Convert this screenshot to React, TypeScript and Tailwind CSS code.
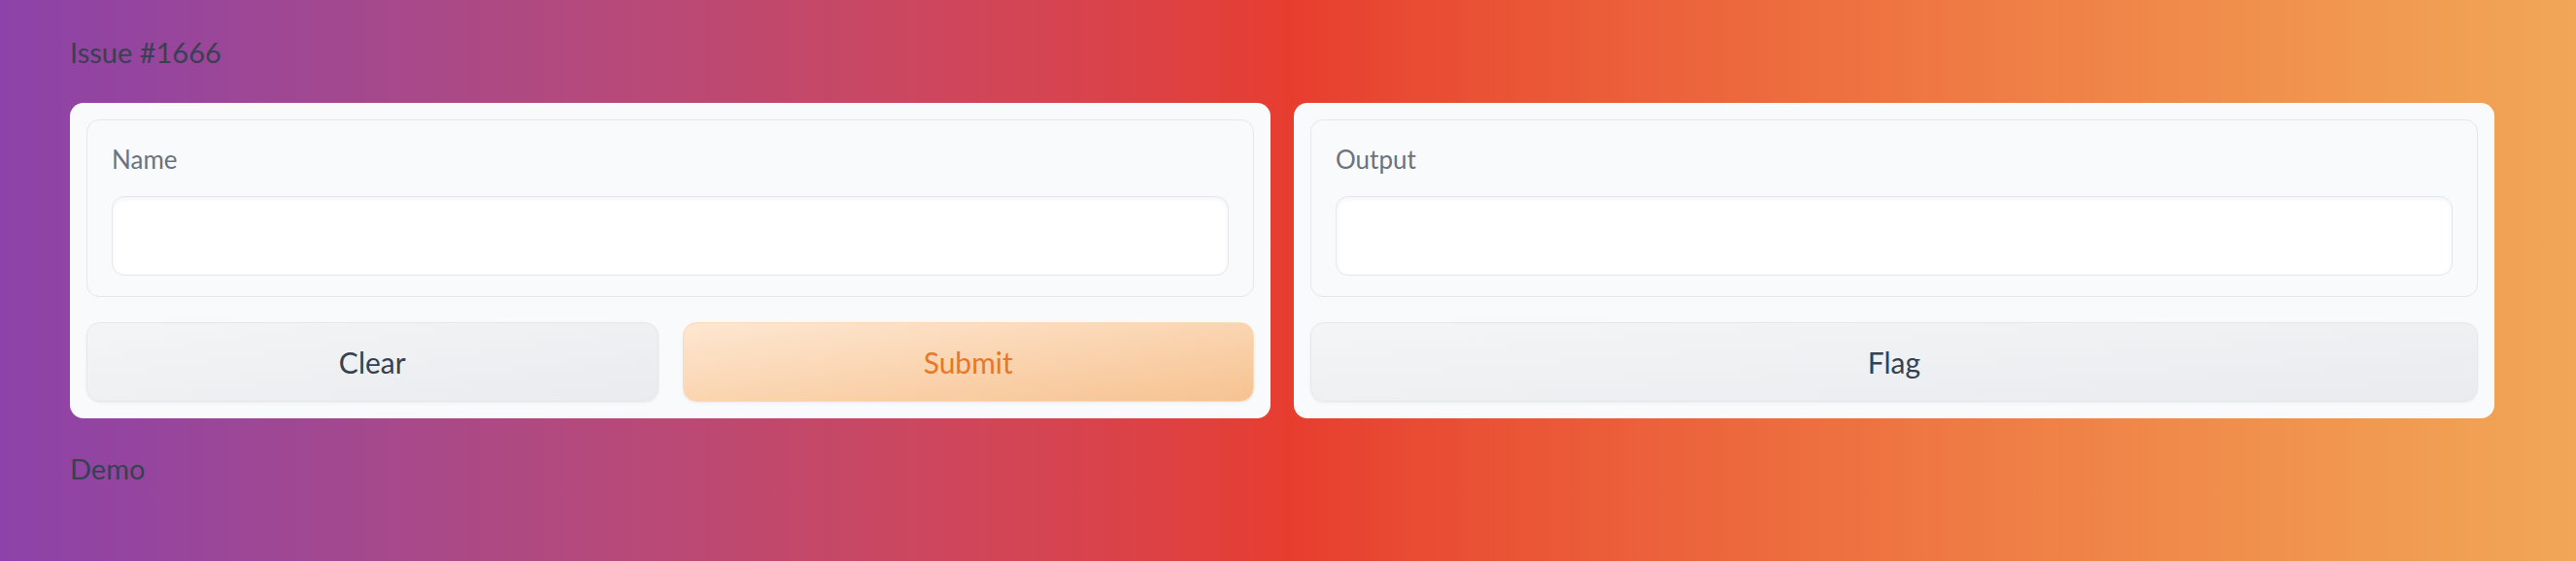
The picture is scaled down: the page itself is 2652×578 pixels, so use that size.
const font = "font-['Lato','Liberation_Sans',sans-serif]";

function Field({ label }: { label: string }) {
  return (
    <div className="flex flex-col rounded-[13px] border border-[#e5e7eb] bg-[#f9fafb] px-[25px] pt-[22px] pb-[21px]">
      <span className="mb-[20px] text-[26px] leading-[36px] text-[#6b7280]">{label}</span>
      <div className="h-[82px] rounded-[13px] border border-[#e5e7eb] bg-white shadow-[inset_0_2px_5px_rgba(0,0,0,0.05)]" />
    </div>
  );
}

function Button({ children, primary }: { children: string; primary?: boolean }) {
  return (
    <button
      className={
        primary
          ? "flex h-[82px] flex-1 items-center justify-center rounded-[14px] border border-[#fcd9b6] bg-gradient-to-br from-[#fde7d1] to-[#f7c290] text-[30px] text-[#e8772a] shadow-[0_1px_3px_rgba(0,0,0,0.06)]"
          : "flex h-[82px] flex-1 items-center justify-center rounded-[14px] border border-[#e5e7eb] bg-gradient-to-br from-[#f4f5f7] to-[#eaebee] text-[30px] text-[#374151] shadow-[0_1px_3px_rgba(0,0,0,0.06)]"
      }
    >
      {children}
    </button>
  );
}

export default function App() {
  return (
    <div
      className={`${font} min-h-[578px] w-full bg-gradient-to-r from-[#8c42a8] via-[#e73d2f] to-[#f1a757] pt-[32px] pr-[84px] pl-[72px]`}
    >
      <p className="text-[29px] leading-[44px] text-[#374151]">Issue #1666</p>

      <div className="mt-[30px] flex gap-[24px]">
        <div className="flex flex-1 flex-col gap-[26px] rounded-[14px] bg-[#f9fafb] p-[17px]">
          <Field label="Name" />
          <div className="flex gap-[25px]">
            <Button>Clear</Button>
            <Button primary>Submit</Button>
          </div>
        </div>
        <div className="flex flex-1 flex-col gap-[26px] rounded-[14px] bg-[#f9fafb] p-[17px]">
          <Field label="Output" />
          <div className="flex">
            <Button>Flag</Button>
          </div>
        </div>
      </div>

      <p className="mt-[30px] text-[29px] leading-[44px] text-[#374151]">Demo</p>
    </div>
  );
}
